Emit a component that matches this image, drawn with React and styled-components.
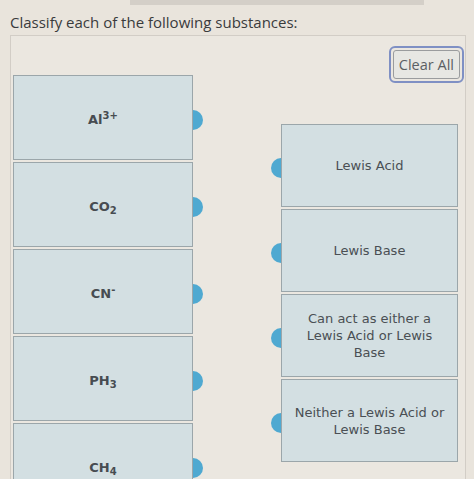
import React from "react";
import styled, { createGlobalStyle } from "styled-components";

const GlobalStyle = createGlobalStyle`
  html, body {
    margin: 0;
    padding: 0;
    background: #e9e4dc;
    overflow: hidden;
  }
  body {
    font-family: "Open Sans", "DejaVu Sans", sans-serif;
    color: #3d3f41;
  }
`;

const substances = [
  { id: "al", label: <>Al<sup>3+</sup></> },
  { id: "co2", label: <>CO<sub>2</sub></> },
  { id: "cn", label: <>CN<sup>-</sup></> },
  { id: "ph3", label: <>PH<sub>3</sub></> },
  { id: "ch4", label: <>CH<sub>4</sub></> },
];

const categories = [
  "Lewis Acid",
  "Lewis Base",
  "Can act as either a Lewis Acid or Lewis Base",
  "Neither a Lewis Acid or Lewis Base",
];

export default function App() {
  return (
    <Page>
      <GlobalStyle />
      <TopStrip />
      <Heading>Classify each of the following substances:</Heading>
      <Panel>
        <LeftCol>
          {substances.map((s) => (
            <Card key={s.id} $height={85}>
              <Formula>{s.label}</Formula>
              <Tab $side="right" />
            </Card>
          ))}
        </LeftCol>
        <RightCol>
          <ClearRing>
            <ClearButton>Clear All</ClearButton>
          </ClearRing>
          <TargetList>
            {categories.map((c) => (
              <Card key={c} $height={83}>
                <Label>{c}</Label>
                <Tab $side="left" />
              </Card>
            ))}
          </TargetList>
        </RightCol>
      </Panel>
    </Page>
  );
}

const Page = styled.div`
  width: 474px;
  height: 479px;
  overflow: hidden;
`;

const TopStrip = styled.div`
  height: 5px;
  margin: 0 50px 0 130px;
  background: #d4cfc8;
`;

const Heading = styled.h1`
  margin: 0;
  padding: 7px 0 0 10px;
  height: 28px;
  box-sizing: border-box;
  font-size: 15px;
  font-weight: 400;
  line-height: 20px;
  color: #3a3b3c;
`;

const Panel = styled.div`
  margin: 2px 8px 0 10px;
  height: 460px;
  border: 1px solid #d2cdc6;
  border-bottom: none;
  background: #ebe7e0;
  display: grid;
  grid-template-columns: 180px 1fr;
  padding: 0 1px 0 2px;
`;

const LeftCol = styled.div`
  padding-top: 39px;
  display: flex;
  flex-direction: column;
  gap: 2px;
`;

const RightCol = styled.div`
  padding-top: 10px;
  display: flex;
  flex-direction: column;
  align-items: flex-end;
`;

const ClearRing = styled.div`
  border: 2px solid #7f90c4;
  border-radius: 6px;
  padding: 2px;
`;

const ClearButton = styled.button`
  display: block;
  height: 29px;
  padding: 0 5px;
  border: 1px solid #9a9c9e;
  border-radius: 3px;
  background: #e7e7e3;
  color: #5b5f63;
  font-family: "Open Sans", "DejaVu Sans", sans-serif;
  font-size: 14.5px;
  cursor: pointer;
`;

const TargetList = styled.div`
  margin-top: 41px;
  margin-right: 6px;
  width: 177px;
  display: flex;
  flex-direction: column;
  gap: 2px;
`;

const Card = styled.div`
  position: relative;
  height: ${(p) => p.$height}px;
  box-sizing: border-box;
  background: #d3dfe2;
  border: 1px solid #9ba6aa;
  display: flex;
  align-items: center;
  justify-content: center;
  text-align: center;
  flex-shrink: 0;
`;

const Tab = styled.span`
  position: absolute;
  top: 50%;
  ${(p) => (p.$side === "right" ? "right: -11px;" : "left: -11px;")}
  width: 10px;
  height: 20px;
  margin-top: -8px;
  background: #4fa9d1;
  border-radius: ${(p) => (p.$side === "right" ? "0 10px 10px 0" : "10px 0 0 10px")};
`;

const Formula = styled.span`
  font-family: "DejaVu Sans", Verdana, sans-serif;
  font-weight: 700;
  font-size: 13px;
  color: #474c51;
  margin-top: 4px;

  sup, sub {
    font-size: 10px;
    line-height: 0;
  }
  sup { vertical-align: 5px; }
  sub { vertical-align: -3px; }
`;

const Label = styled.span`
  font-family: "DejaVu Sans", Verdana, sans-serif;
  font-size: 13px;
  line-height: 17px;
  color: #4a4f54;
  max-width: 154px;
`;
